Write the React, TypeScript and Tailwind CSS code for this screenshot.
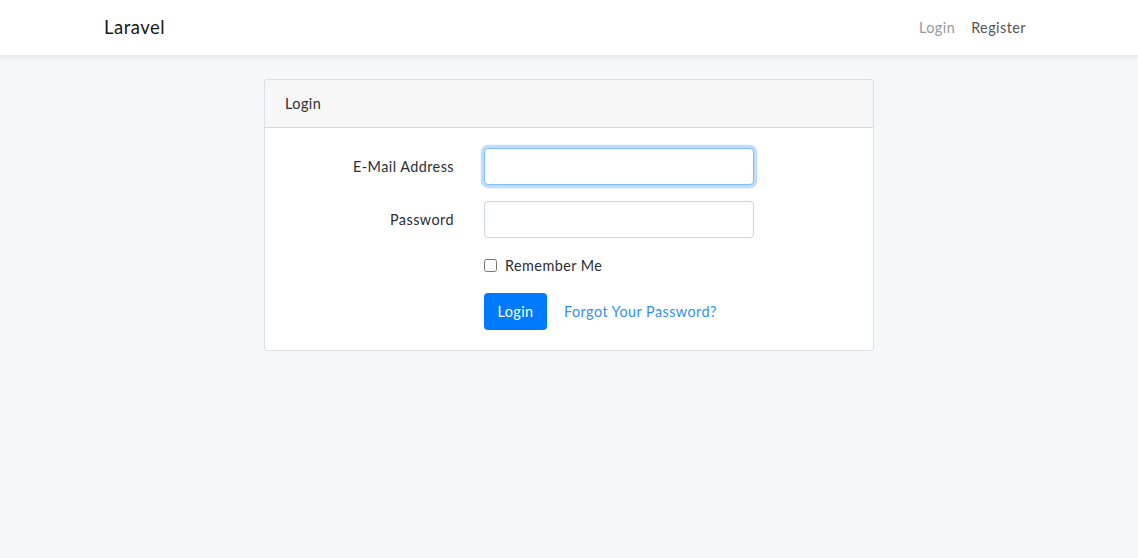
export default function App() {
  return (
    <div className="min-h-screen bg-[#f5f8fa] text-[14.4px] leading-[1.6] text-[#2b2f33] tracking-[0.45px]" style={{ fontFamily: 'Lato, "Open Sans", sans-serif' }}>
      <nav className="bg-white h-[55px] shadow-[0_2px_4px_rgba(0,0,0,0.075)]">
        <div className="w-[960px] mx-auto px-[15px] h-full flex items-center justify-between">
          <a className="text-[18.5px] text-[#1a1a1a] tracking-[0.5px]">Laravel</a>
          <div className="flex items-center">
            <a className="px-2 text-[#999]">Login</a>
            <a className="px-2 text-[#555]">Register</a>
          </div>
        </div>
      </nav>
      <main className="py-6">
        <div className="w-[610px] mx-auto bg-white border border-[rgba(0,0,0,0.125)] rounded">
          <div className="bg-[#f7f7f7] border-b border-[rgba(0,0,0,0.125)] px-5 py-3 rounded-t">Login</div>
          <div className="p-5">
            <div className="flex mb-4">
              <label className="w-[184px] pr-[15px] text-right pt-[7px]">E-Mail Address</label>
              <div className="w-[300px] px-[15px]">
                <input className="w-full h-[37px] rounded border border-[#80bdff] bg-white outline-none shadow-[0_0_0_3.2px_rgba(0,123,255,0.25)] px-3" />
              </div>
            </div>
            <div className="flex mb-4">
              <label className="w-[184px] pr-[15px] text-right pt-[7px]">Password</label>
              <div className="w-[300px] px-[15px]">
                <input type="password" className="w-full h-[37px] rounded border border-[#ced4da] bg-white outline-none px-3" />
              </div>
            </div>
            <div className="flex mb-4">
              <div className="w-[184px]" />
              <div className="w-[300px] px-[15px] flex items-center h-[23px]">
                <input type="checkbox" className="w-[13px] h-[13px] m-0" />
                <span className="ml-[8px]">Remember Me</span>
              </div>
            </div>
            <div className="flex">
              <div className="w-[184px]" />
              <div className="px-[15px] flex items-center">
                <button className="bg-[#007bff] text-white rounded h-[37px] w-[63px] tracking-[0.45px]">Login</button>
                <a className="ml-[17px] text-[#3490f0]">Forgot Your Password?</a>
              </div>
            </div>
          </div>
        </div>
      </main>
    </div>
  );
}
